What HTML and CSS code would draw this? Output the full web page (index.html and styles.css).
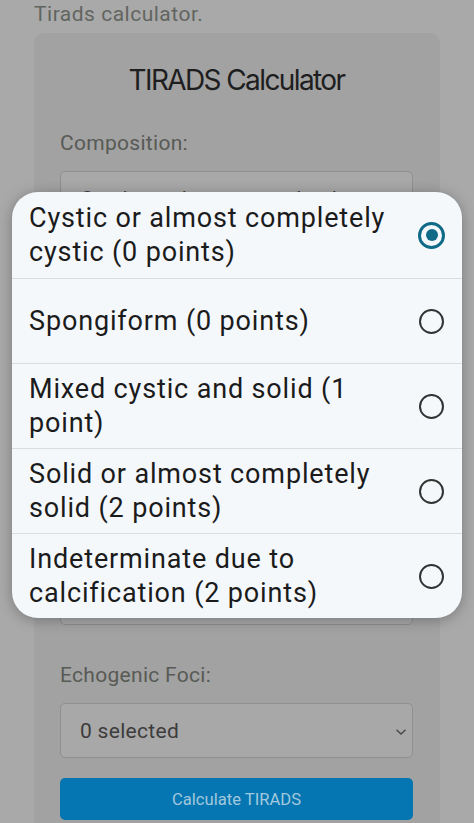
FILE: index.html
```html
<!DOCTYPE html>
<html lang="en">
<head>
<meta charset="utf-8">
<meta name="viewport" content="width=device-width, initial-scale=1">
<title>Tirads calculator</title>
<link rel="stylesheet" href="styles.css">
</head>
<body>
  <p class="intro">Tirads calculator.</p>
  <main class="card">
    <h1 class="title">TIRADS Calculator</h1>
    <div class="field">
      <div class="label">Composition:</div>
      <div class="select"><span class="select-text">Cystic or almost completely cystic (0 points)</span></div>
    </div>
    <div class="field">
      <div class="label">Echogenicity:</div>
      <div class="select"><span class="select-text">Anechoic (0 points)</span></div>
    </div>
    <div class="field">
      <div class="label">Shape:</div>
      <div class="select"><span class="select-text">Wider-than-tall (0 points)</span></div>
    </div>
    <div class="field">
      <div class="label">Margin:</div>
      <div class="select"><span class="select-text">Smooth (0 points)</span></div>
    </div>
    <div class="field field-last">
      <div class="label">Echogenic Foci:</div>
      <div class="select">
        <span class="select-text">0 selected</span>
        <svg class="chevron" width="12" height="8" viewBox="0 0 12 8"><polyline points="1.5,1.8 6,6 10.5,1.8" fill="none" stroke="#454545" stroke-width="1.3"/></svg>
      </div>
    </div>
    <button class="btn">Calculate TIRADS</button>
  </main>

  <div class="sheet">
    <div class="option">
      <span class="option-text">Cystic or almost completely cystic (0 points)</span>
      <span class="radio radio-on"></span>
    </div>
    <div class="option">
      <span class="option-text">Spongiform (0 points)</span>
      <span class="radio"></span>
    </div>
    <div class="option">
      <span class="option-text">Mixed cystic and solid (1 point)</span>
      <span class="radio"></span>
    </div>
    <div class="option">
      <span class="option-text">Solid or almost completely solid (2 points)</span>
      <span class="radio"></span>
    </div>
    <div class="option">
      <span class="option-text">Indeterminate due to calcification (2 points)</span>
      <span class="radio"></span>
    </div>
  </div>
</body>
</html>
```

FILE: styles.css
```css
html, body {
  margin: 0;
  padding: 0;
}

body {
  background: #a9a9a9;
  font-family: Roboto, "Noto Sans", "Liberation Sans", sans-serif;
  overflow: hidden;
  height: 823px;
}

.intro {
  margin: 0;
  padding: 2px 34px 0;
  font-size: 21px;
  line-height: 24px;
  letter-spacing: 0.5px;
  color: #62655f;
}

.card {
  margin: 7px 34px 0;
  padding: 30px 27px 40px 26px;
  background: #a2a2a2;
  border-radius: 10px;
}

.title {
  margin: 0 0 32px;
  font-family: Inter, "Liberation Sans", sans-serif;
  font-weight: 400;
  font-size: 28px;
  line-height: 34px;
  letter-spacing: -1.6px;
  text-align: center;
  color: #1e1e1e;
}

.field {
  margin-bottom: 36px;
}

.field-last {
  margin-bottom: 20px;
}

.label {
  margin: 0 0 14px;
  font-size: 21px;
  line-height: 28px;
  letter-spacing: 0.3px;
  color: #585a55;
}

.select {
  position: relative;
  box-sizing: border-box;
  height: 55px;
  display: flex;
  align-items: center;
  padding: 0 28px 0 19px;
  background: #a8a8a8;
  border: 1px solid #8f8f8f;
  border-radius: 5px;
  font-size: 21px;
  letter-spacing: 0.3px;
  color: #3c3c3c;
}

.select-text {
  white-space: nowrap;
  overflow: hidden;
  text-overflow: ellipsis;
}

.chevron {
  position: absolute;
  right: 5px;
  top: 24px;
}

.btn {
  display: block;
  width: 100%;
  height: 42px;
  border: none;
  border-radius: 5px;
  background: #0576b1;
  color: #a2c8dd;
  font-family: Roboto, "Liberation Sans", sans-serif;
  font-size: 16.6px;
}

.sheet {
  position: absolute;
  left: 12px;
  top: 192px;
  width: 450px;
  background: #f4f8fb;
  border-radius: 26px;
  box-shadow: 0 2px 14px rgba(0, 0, 0, 0.28);
  overflow: hidden;
}

.option {
  box-sizing: border-box;
  height: 85px;
  display: flex;
  align-items: center;
  padding: 0 17px 0 17px;
  border-top: 1px solid #d9dde1;
}

.option:first-child {
  border-top: none;
  height: 86px;
}

.option-text {
  flex: 1;
  margin-right: 20px;
  font-size: 27px;
  line-height: 34px;
  letter-spacing: 0.85px;
  color: #1b1b1b;
}

.radio {
  box-sizing: border-box;
  width: 25px;
  height: 25px;
  flex: none;
  border: 2.5px solid #333;
  border-radius: 50%;
  margin-right: 1px;
  position: relative;
}

.radio-on {
  width: 27px;
  height: 27px;
  margin-right: 0;
  border: 3px solid #0f6a88;
}

.radio-on::after {
  content: "";
  position: absolute;
  left: 4.5px;
  top: 4.5px;
  width: 12px;
  height: 12px;
  border-radius: 50%;
  background: #0f6a88;
}
```
